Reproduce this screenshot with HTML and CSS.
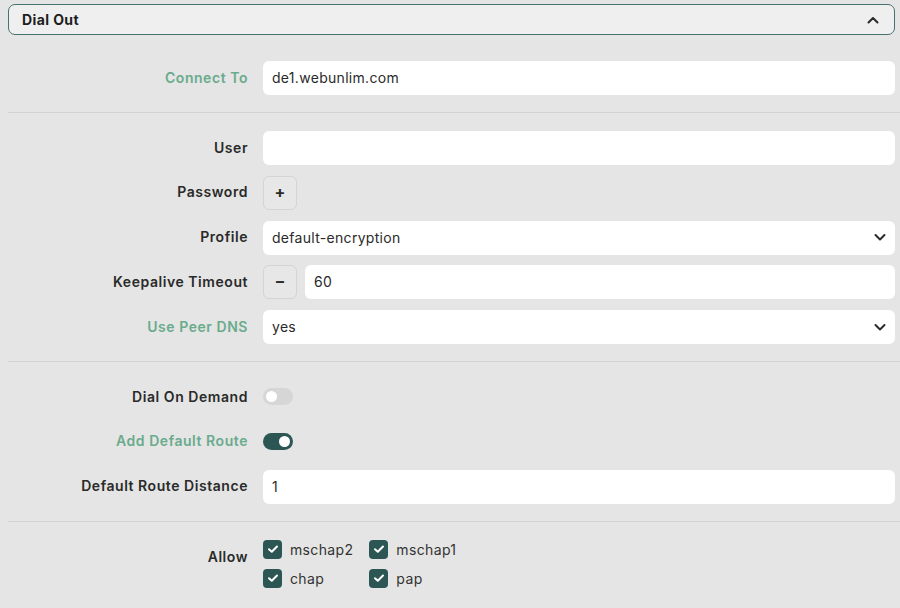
FILE: index.html
```html
<!DOCTYPE html>
<html>
<head>
<meta charset="utf-8">
<link rel="stylesheet" href="styles.css">
</head>
<body>
<div class="page">
  <div class="panel-head">
    <span class="panel-title">Dial Out</span>
    <svg class="chev" width="14" height="14" viewBox="0 0 14 14"><path d="M2.5 9.5 L7 5 L11.5 9.5" fill="none" stroke="#2a2a2a" stroke-width="2" stroke-linecap="round" stroke-linejoin="round"/></svg>
  </div>

  <div class="section">
    <div class="row">
      <label class="lbl green">Connect To</label>
      <div class="field"><div class="input">de1.webunlim.com</div></div>
    </div>
  </div>

  <div class="section">
    <div class="row">
      <label class="lbl">User</label>
      <div class="field"><div class="input"></div></div>
    </div>
    <div class="row">
      <label class="lbl">Password</label>
      <div class="field"><button class="sq-btn">+</button></div>
    </div>
    <div class="row">
      <label class="lbl">Profile</label>
      <div class="field"><div class="input select">default-encryption
        <svg class="dd" width="14" height="14" viewBox="0 0 14 14"><path d="M2.5 5 L7 9.5 L11.5 5" fill="none" stroke="#2a2a2a" stroke-width="2" stroke-linecap="round" stroke-linejoin="round"/></svg></div></div>
    </div>
    <div class="row">
      <label class="lbl">Keepalive Timeout</label>
      <div class="field with-btn"><button class="sq-btn">&#8211;</button><div class="input grow">60</div></div>
    </div>
    <div class="row">
      <label class="lbl green">Use Peer DNS</label>
      <div class="field"><div class="input select">yes
        <svg class="dd" width="14" height="14" viewBox="0 0 14 14"><path d="M2.5 5 L7 9.5 L11.5 5" fill="none" stroke="#2a2a2a" stroke-width="2" stroke-linecap="round" stroke-linejoin="round"/></svg></div></div>
    </div>
  </div>

  <div class="section">
    <div class="row">
      <label class="lbl">Dial On Demand</label>
      <div class="field"><span class="toggle"><span class="knob"></span></span></div>
    </div>
    <div class="row">
      <label class="lbl green">Add Default Route</label>
      <div class="field"><span class="toggle on"><span class="knob"></span></span></div>
    </div>
    <div class="row">
      <label class="lbl">Default Route Distance</label>
      <div class="field"><div class="input">1</div></div>
    </div>
  </div>

  <div class="section last">
    <div class="row top">
      <label class="lbl">Allow</label>
      <div class="checks">
        <span class="chk"><span class="box"><svg width="14" height="14" viewBox="0 0 14 14"><path d="M3 7.2 L5.8 9.8 L11 4.5" fill="none" stroke="#fff" stroke-width="2" stroke-linecap="round" stroke-linejoin="round"/></svg></span>mschap2</span>
        <span class="chk"><span class="box"><svg width="14" height="14" viewBox="0 0 14 14"><path d="M3 7.2 L5.8 9.8 L11 4.5" fill="none" stroke="#fff" stroke-width="2" stroke-linecap="round" stroke-linejoin="round"/></svg></span>mschap1</span>
        <span class="chk"><span class="box"><svg width="14" height="14" viewBox="0 0 14 14"><path d="M3 7.2 L5.8 9.8 L11 4.5" fill="none" stroke="#fff" stroke-width="2" stroke-linecap="round" stroke-linejoin="round"/></svg></span>chap</span>
        <span class="chk"><span class="box"><svg width="14" height="14" viewBox="0 0 14 14"><path d="M3 7.2 L5.8 9.8 L11 4.5" fill="none" stroke="#fff" stroke-width="2" stroke-linecap="round" stroke-linejoin="round"/></svg></span>pap</span>
      </div>
    </div>
  </div>
</div>
</body>
</html>
```
FILE: styles.css
```css
* { box-sizing: border-box; }
html, body { margin: 0; padding: 0; }
body {
  background: #e4e5e4;
  font-family: Inter, "Noto Sans", sans-serif;
  font-size: 14px;
  color: #2a2a2a;
  width: 900px;
  height: 608px;
  overflow: hidden;
}
.page { padding-top: 4px; }
.panel-head {
  margin: 0 5px 8px 8px;
  height: 31px;
  border: 1.5px solid #46716f;
  border-radius: 7px;
  background: #efefef;
  display: flex;
  align-items: center;
  justify-content: space-between;
  padding: 0 14px 0 13px;
}
.panel-title { font-weight: 700; font-size: 14px; color: #1e1e1e; letter-spacing: 0.4px; }
.chev { display: block; }
.section {
  margin-left: 8px;
  padding: 18px 5px 17px 0;
  border-bottom: 1px solid #d2d3d2;
  display: flex;
  flex-direction: column;
  gap: 10.75px;
}
.section.last { border-bottom: none; }
.row {
  display: grid;
  grid-template-columns: 240px 1fr;
  column-gap: 15px;
  align-items: center;
  min-height: 34px;
}
.row.top { align-items: start; }
.row.top .lbl { line-height: 33px; padding-bottom: 0; }
.lbl {
  text-align: right;
  font-weight: 600;
  color: #2a2a2a;
  letter-spacing: 0.55px;
  line-height: 16px;
  padding-bottom: 1px;
}
.lbl.green { color: #6aab8d; }
.field { display: flex; align-items: center; }
.with-btn { gap: 8px; }
.input {
  flex: 1;
  height: 34px;
  background: #fff;
  border-radius: 6px;
  padding: 0 9px 1px;
  display: flex;
  align-items: center;
  color: #2a2a2a;
  letter-spacing: 0.3px;
}
.select { justify-content: space-between; padding-right: 8px; }
.dd { display: block; }
.sq-btn {
  width: 34px;
  height: 34px;
  flex: none;
  border: 1px solid #d3d4d3;
  border-radius: 6px;
  background: #e6e7e6;
  font-family: Inter, sans-serif;
  font-weight: 700;
  font-size: 16px;
  color: #2a2a2a;
  padding: 0 0 2px;
  display: flex;
  align-items: center;
  justify-content: center;
}
.toggle {
  width: 30px;
  height: 17px;
  border-radius: 9px;
  background: #d5d6d5;
  position: relative;
  display: inline-block;
  margin-top: -1px;
}
.toggle .knob {
  position: absolute;
  top: 3px;
  left: 3px;
  width: 11px;
  height: 11px;
  border-radius: 50%;
  background: #fff;
}
.toggle.on { background: #2c5654; }
.toggle.on .knob { left: auto; right: 3px; }
.checks {
  display: grid;
  grid-template-columns: auto auto;
  justify-content: start;
  column-gap: 16px;
  row-gap: 10px;
}
.chk { display: flex; align-items: center; gap: 8px; color: #333; height: 19px; letter-spacing: 0.35px; }
.box {
  width: 19px;
  height: 19px;
  border-radius: 4px;
  background: #2c5654;
  display: flex;
  align-items: center;
  justify-content: center;
}
.box svg { display: block; }
```
